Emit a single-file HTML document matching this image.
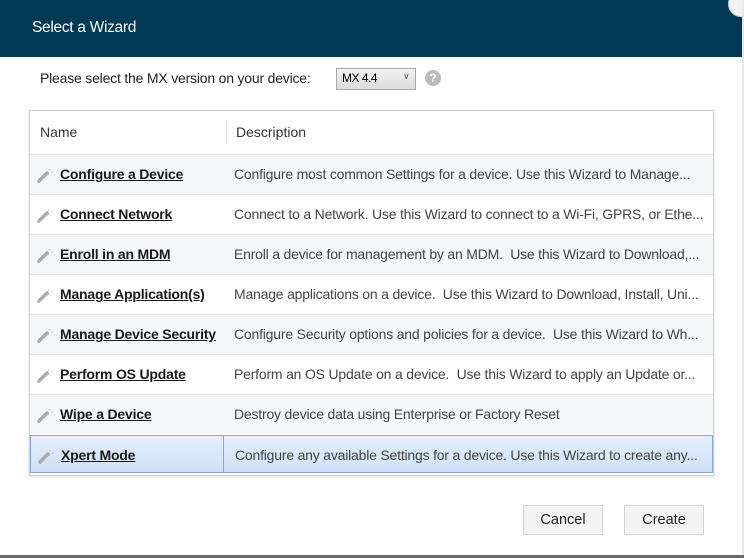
<!DOCTYPE html>
<html><head><style>
body{margin:0;width:744px;height:558px;overflow:hidden;background:#fff;font-family:"Liberation Sans",sans-serif;position:relative}
.hdr{position:absolute;left:0;top:0;width:742px;height:57px;background:#023a56}
.hdr span{position:absolute;left:32px;top:19px;color:#fff;font-size:15.5px;letter-spacing:-0.3px}
.circ{position:absolute;left:728px;top:-9px;width:24px;height:24px;border-radius:50%;background:#f2f2f2;border:1px solid #ccc}
.redge{position:absolute;left:742px;top:0;width:2px;height:558px;background:#e8e8e8}
.bot{position:absolute;left:0;top:555px;width:744px;height:3px;background:#6a6a6a}
.lbl{position:absolute;left:40px;top:70px;font-size:14px;color:#222;letter-spacing:-0.2px}
.sel{position:absolute;left:336px;top:68px;width:78px;height:20px;border:1px solid #a8a8a8;background:linear-gradient(#f2f2f2,#dcdcdc);font-size:12px;letter-spacing:-0.5px}
.sel span{position:absolute;left:5px;top:2px}
.sel i{position:absolute;left:66px;top:2px;font-style:normal;font-size:9px;color:#555}
.q{position:absolute;left:425px;top:70px;width:16px;height:16px;border-radius:50%;background:#bbb;color:#fff;font-size:12px;font-weight:bold;text-align:center;line-height:16px}
.tbl{position:absolute;left:29px;top:110px;width:683px;height:364px;border:1px solid #c9ced4;box-shadow:0 1px 2px #ddd}
.th{position:absolute;top:1px;height:43px;line-height:40px;font-size:14px;color:#333}
.row{position:absolute;left:0;width:683px;height:39px;border-top:1px solid #dfe2e6;font-size:14px;letter-spacing:-0.2px}
.row.a{background:#f5f6f7}
.row .n{position:absolute;left:30px;top:11px;font-weight:bold;text-decoration:underline;color:#1a1a1a}
.row .d{position:absolute;left:204px;top:11px;color:#444;width:478px;white-space:nowrap;overflow:hidden}
.row svg{position:absolute;left:6px;top:11px}
.row.s{background:linear-gradient(#e4eefb,#cfe0f6);border:1px solid #86a8d4;height:36px;width:681px}
.row.s .sep{position:absolute;left:192px;top:0;height:36px;border-left:1px solid #86a8d4}
.btn{position:absolute;top:505px;width:78px;height:28px;border:1px solid #d3d3d3;background:#f3f3f3;font-size:14.5px;text-align:center;line-height:28px;color:#222}
</style></head><body>
<div class="hdr"><span>Select a Wizard</span></div>
<div class="circ"></div>
<div class="redge"></div>
<div class="lbl">Please select the MX version on your device:</div>
<div class="sel"><span>MX 4.4</span><i>&#x2228;</i></div>
<div class="q">?</div>
<div class="tbl">
<div class="th" style="left:10px">Name</div>
<div style="position:absolute;left:196px;top:10px;height:22px;border-left:1px solid #ddd"></div>
<div class="th" style="left:206px">Description</div>
<div class="row a" style="top:43px"><svg width="18" height="18"><path d="M3 15L11 7" stroke="#aaa" stroke-width="3.5" stroke-linecap="round"/><path d="M13 3v2M15 6h2M12 8l1 1" stroke="#bbb"/></svg><span class="n">Configure a Device</span><span class="d">Configure most common Settings for a device. Use this Wizard to Manage...</span></div>
<div class="row" style="top:83px"><svg width="18" height="18"><path d="M3 15L11 7" stroke="#aaa" stroke-width="3.5" stroke-linecap="round"/><path d="M13 3v2M15 6h2M12 8l1 1" stroke="#bbb"/></svg><span class="n">Connect Network</span><span class="d">Connect to a Network. Use this Wizard to connect to a Wi-Fi, GPRS, or Ethe...</span></div>
<div class="row a" style="top:123px"><svg width="18" height="18"><path d="M3 15L11 7" stroke="#aaa" stroke-width="3.5" stroke-linecap="round"/><path d="M13 3v2M15 6h2M12 8l1 1" stroke="#bbb"/></svg><span class="n">Enroll in an MDM</span><span class="d">Enroll a device for management by an MDM.&nbsp; Use this Wizard to Download,...</span></div>
<div class="row" style="top:163px"><svg width="18" height="18"><path d="M3 15L11 7" stroke="#aaa" stroke-width="3.5" stroke-linecap="round"/><path d="M13 3v2M15 6h2M12 8l1 1" stroke="#bbb"/></svg><span class="n">Manage Application(s)</span><span class="d">Manage applications on a device.&nbsp; Use this Wizard to Download, Install, Uni...</span></div>
<div class="row a" style="top:203px"><svg width="18" height="18"><path d="M3 15L11 7" stroke="#aaa" stroke-width="3.5" stroke-linecap="round"/><path d="M13 3v2M15 6h2M12 8l1 1" stroke="#bbb"/></svg><span class="n">Manage Device Security</span><span class="d">Configure Security options and policies for a device.&nbsp; Use this Wizard to Wh...</span></div>
<div class="row" style="top:243px"><svg width="18" height="18"><path d="M3 15L11 7" stroke="#aaa" stroke-width="3.5" stroke-linecap="round"/><path d="M13 3v2M15 6h2M12 8l1 1" stroke="#bbb"/></svg><span class="n">Perform OS Update</span><span class="d">Perform an OS Update on a device.&nbsp; Use this Wizard to apply an Update or...</span></div>
<div class="row a" style="top:283px"><svg width="18" height="18"><path d="M3 15L11 7" stroke="#aaa" stroke-width="3.5" stroke-linecap="round"/><path d="M13 3v2M15 6h2M12 8l1 1" stroke="#bbb"/></svg><span class="n">Wipe a Device</span><span class="d">Destroy device data using Enterprise or Factory Reset</span></div>
<div class="row s" style="top:324px"><div class="sep"></div><svg width="18" height="18"><path d="M3 15L11 7" stroke="#aaa" stroke-width="3.5" stroke-linecap="round"/><path d="M13 3v2M15 6h2M12 8l1 1" stroke="#bbb"/></svg><span class="n">Xpert Mode</span><span class="d">Configure any available Settings for a device. Use this Wizard to create any...</span></div>
</div>
<div class="btn" style="left:523px">Cancel</div>
<div class="btn" style="left:624px">Create</div>
<div class="bot"></div>
</body></html>
